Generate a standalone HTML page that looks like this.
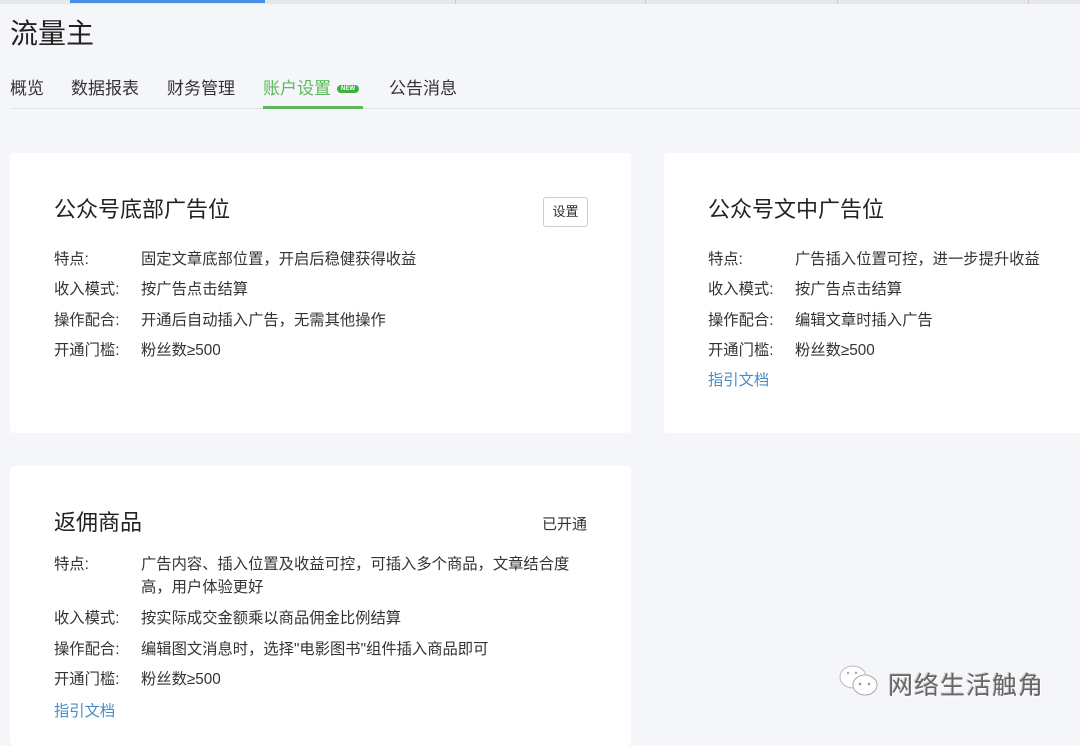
<!DOCTYPE html>
<html><head><meta charset="utf-8"><style>
*{margin:0;padding:0;box-sizing:border-box}
body{width:1080px;height:730px;overflow:hidden;background:#f5f6fa;font-family:"Liberation Sans","Noto Sans CJK SC",sans-serif;color:#333;position:relative}
.top{position:absolute;top:0;left:0;width:1080px;height:4px;background:#e6e7ea}
.top .b{position:absolute;left:70px;width:195px;height:3px;background:#4a90e2}
.top i{position:absolute;top:0;width:1px;height:4px;background:#ccc}
h1{position:absolute;left:10px;top:12px;font-size:28px;font-weight:normal;color:#222}
.tabs{position:absolute;left:10px;top:72px;width:1070px;height:37px;border-bottom:1px solid #e2e3e6;font-size:17px;color:#333}
.tabs span{position:absolute;top:2px}
.tabs .on{color:#5cb85c}
.new{display:inline-block;background:#3fb13f;color:#fff;font-size:6px;border-radius:5px;padding:1px 4px;vertical-align:4px;margin-left:6px;font-weight:bold}
.ul{position:absolute;left:253px;top:34px;width:100px;height:3px;background:#5cb85c}
.card{position:absolute;background:#fff;border-radius:4px}
.card h2{position:absolute;left:44px;top:39px;font-size:22px;font-weight:normal;color:#222}
.row{position:absolute;left:44px;font-size:15.3px;color:#333;line-height:23px}
.row b{font-weight:normal;position:absolute;left:0;white-space:nowrap}
.row em{font-style:normal;position:absolute;left:87px;white-space:nowrap}
.link{position:absolute;left:44px;font-size:15.3px;color:#4a8cc7}
.btn{position:absolute;left:533px;top:44px;width:45px;height:30px;border:1px solid #ccc;border-radius:3px;font-size:13px;text-align:center;line-height:28px;color:#333}
.wm{position:absolute;left:888px;top:666px;font-size:25px;color:#666;text-shadow:1px 1px 0 #fff,-1px -1px 0 #ccc;letter-spacing:1px}
</style></head><body>
<div class="top"><div class="b"></div><i style="left:455px"></i><i style="left:645px"></i><i style="left:837px"></i><i style="left:1028px"></i></div>
<h1>流量主</h1>
<div class="tabs">
<span style="left:0">概览</span><span style="left:61px">数据报表</span><span style="left:157px">财务管理</span><span class="on" style="left:253px">账户设置<span class="new" style="position:static">NEW</span></span><span style="left:379px">公告消息</span>
<div class="ul"></div></div>

<div class="card" style="left:10px;top:153px;width:621px;height:280px">
<h2>公众号底部广告位</h2><div class="btn">设置</div>
<div class="row" style="top:95px"><b>特点:</b><em>固定文章底部位置，开启后稳健获得收益</em></div>
<div class="row" style="top:125px"><b>收入模式:</b><em>按广告点击结算</em></div>
<div class="row" style="top:156px"><b>操作配合:</b><em>开通后自动插入广告，无需其他操作</em></div>
<div class="row" style="top:186px"><b>开通门槛:</b><em>粉丝数≥500</em></div>
</div>

<div class="card" style="left:664px;top:153px;width:430px;height:280px">
<h2>公众号文中广告位</h2>
<div class="row" style="top:95px"><b>特点:</b><em>广告插入位置可控，进一步提升收益</em></div>
<div class="row" style="top:125px"><b>收入模式:</b><em>按广告点击结算</em></div>
<div class="row" style="top:156px"><b>操作配合:</b><em>编辑文章时插入广告</em></div>
<div class="row" style="top:186px"><b>开通门槛:</b><em>粉丝数≥500</em></div>
<div class="link" style="top:215px">指引文档</div>
</div>

<div class="card" style="left:10px;top:466px;width:621px;height:280px">
<h2>返佣商品</h2>
<div style="position:absolute;left:532px;top:47px;font-size:15px">已开通</div>
<div class="row" style="top:87px"><b>特点:</b><em style="white-space:normal;width:436px">广告内容、插入位置及收益可控，可插入多个商品，文章结合度高，用户体验更好</em></div>
<div class="row" style="top:141px"><b>收入模式:</b><em>按实际成交金额乘以商品佣金比例结算</em></div>
<div class="row" style="top:172px"><b>操作配合:</b><em>编辑图文消息时，选择"电影图书"组件插入商品即可</em></div>
<div class="row" style="top:202px"><b>开通门槛:</b><em>粉丝数≥500</em></div>
<div class="link" style="top:233px">指引文档</div>
</div>

<svg style="position:absolute;left:838px;top:664px" width="44" height="36" viewBox="0 0 44 36"><ellipse cx="15" cy="13" rx="13" ry="11" fill="#fff" stroke="#bbb"/><ellipse cx="27" cy="21" rx="12" ry="10" fill="#fff" stroke="#aaa"/><circle cx="22" cy="20" r="1.3" fill="#999"/><circle cx="31" cy="20" r="1.3" fill="#999"/><circle cx="10" cy="9" r="1.2" fill="#aaa"/><circle cx="18" cy="9" r="1.2" fill="#aaa"/></svg>
<div class="wm">网络生活触角</div>
</body></html>
